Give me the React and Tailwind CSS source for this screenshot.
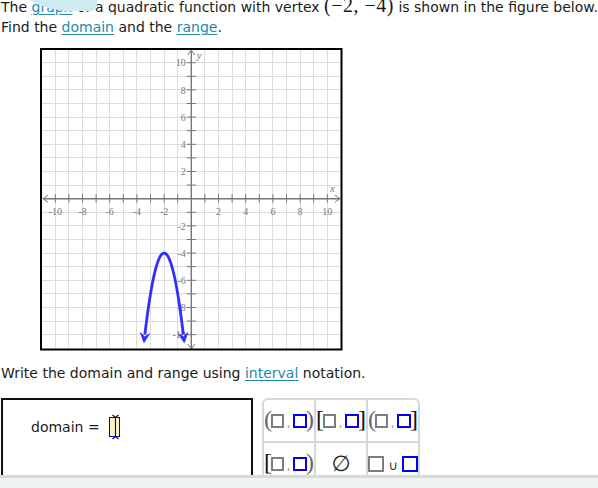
import React from "react";

// plot geometry (svg-local pixels)
const U = 13.6;
const OX = 151.3;
const OY = 150.7;
const X = (v) => OX + U * v;
const Y = (v) => OY - U * v;
const crisp = (p) => Math.round(p - 0.5) + 0.5;

const BLUE = "#2f2fff";
const AXIS = "#777";

function ArrowHead({ x, dir }) {
  const slope = -6 * (x + 2);
  const dxp = dir * U;
  const dyp = -(slope * dir) * U;
  const len = Math.hypot(dxp, dyp);
  const ux = dxp / len;
  const uy = dyp / len;
  const ang = (Math.atan2(uy, ux) * 180) / Math.PI;
  const tx = X(x) + ux * 8;
  const ty = Y(-10) + uy * 8;
  return (
    <path
      transform={`translate(${tx.toFixed(2)} ${ty.toFixed(2)}) rotate(${ang.toFixed(2)})`}
      d="M0,0 L-9.5,-4.6 L-6,0 L-9.5,4.6 Z"
      fill={BLUE}
      stroke={BLUE}
      strokeWidth="0.8"
      strokeLinejoin="round"
    />
  );
}

function Graph() {
  const grid = [];
  for (let i = -10; i <= 10; i++) grid.push(i);
  const x0 = -2 - Math.sqrt(2);
  const x1 = -2 + Math.sqrt(2);
  const pts = [];
  for (let k = 0; k <= 80; k++) {
    const x = x0 + ((x1 - x0) * k) / 80;
    const y = -3 * (x + 2) ** 2 - 4;
    pts.push(`${X(x).toFixed(2)},${Y(y).toFixed(2)}`);
  }
  const evens = [-10, -8, -6, -4, -2, 2, 4, 6, 8, 10];
  return (
    <svg width="303" height="303" viewBox="0 0 303 303" className="block">
      <rect x="0" y="0" width="303" height="303" fill="#fff" />
      {grid.map((i) => (
        <g key={`g${i}`}>
          <line x1={crisp(X(i))} y1="2" x2={crisp(X(i))} y2="301" stroke="#dcdcdc" strokeWidth="1" />
          <line x1="2" y1={crisp(Y(i))} x2="301" y2={crisp(Y(i))} stroke="#dcdcdc" strokeWidth="1" />
        </g>
      ))}

      {/* axes */}
      <line x1="3" y1={OY} x2="300" y2={OY} stroke={AXIS} strokeWidth="1.4" />
      <line x1={OX} y1="3" x2={OX} y2="300" stroke={AXIS} strokeWidth="1.4" />
      <polyline points={`8,${OY - 3.5} 3,${OY} 8,${OY + 3.5}`} fill="none" stroke={AXIS} strokeWidth="1" />
      <polyline points={`295,${OY - 3.5} 300,${OY} 295,${OY + 3.5}`} fill="none" stroke={AXIS} strokeWidth="1" />
      <polyline points={`${OX - 3.5},7 ${OX},2 ${OX + 3.5},7`} fill="none" stroke={AXIS} strokeWidth="1" />
      <polyline points={`${OX - 3.5},296 ${OX},301 ${OX + 3.5},296`} fill="none" stroke={AXIS} strokeWidth="1" />

      {/* ticks */}
      {grid
        .filter((i) => i !== 0)
        .map((i) => (
          <g key={`t${i}`}>
            <line x1={X(i)} y1={OY - 4.5} x2={X(i)} y2={OY + 4} stroke={AXIS} strokeWidth="1" />
            <line x1={OX - 4.5} y1={Y(i)} x2={OX + 4.5} y2={Y(i)} stroke={AXIS} strokeWidth="1" />
          </g>
        ))}

      {/* labels */}
      <g fontFamily="'Liberation Serif', serif" fontSize="10" fill="#777">
        {evens.map((i) => (
          <text key={`lx${i}`} x={X(i)} y={OY + 16} textAnchor="middle">
            {i < 0 ? `-${-i}` : `${i}`}
          </text>
        ))}
        {evens.map((i) => (
          <text key={`ly${i}`} x={OX - 5.5} y={Y(i) + 3.6} textAnchor="end">
            {i < 0 ? `-${-i}` : `${i}`}
          </text>
        ))}
        <text x={OX + 5.5} y="11" fontStyle="italic" fontSize="11">y</text>
        <text x="290" y={OY - 7} fontStyle="italic" fontSize="11">x</text>
      </g>

      {/* parabola */}
      <polyline points={pts.join(" ")} fill="none" stroke={BLUE} strokeWidth="2.8" strokeLinejoin="round" />
      <ArrowHead x={x0} dir={-1} />
      <ArrowHead x={x1} dir={1} />

      <rect x="1" y="1" width="300.5" height="300.5" fill="none" stroke="#000" strokeWidth="2" />
    </svg>
  );
}

function GrayBox({ big }) {
  return (
    <span
      className={
        big
          ? "inline-block shrink-0 w-[16px] h-[16px] border-2 border-[#7d7d7d] bg-white"
          : "inline-block shrink-0 w-[13px] h-[14px] border-2 border-[#7d7d7d] bg-white"
      }
    />
  );
}

function BlueBox({ big }) {
  return (
    <span
      className={
        big
          ? "inline-block shrink-0 w-[16px] h-[16px] border-2 border-[#0000ff] bg-white"
          : "inline-block shrink-0 w-[14px] h-[14px] border-2 border-[#0000ff] bg-white"
      }
    />
  );
}

function Delim({ ch, dark }) {
  return (
    <span
      className={
        dark
          ? "w-[6px] shrink-0 flex justify-center font-['Liberation_Serif',serif] text-[24px] leading-none text-[#111] -mt-[3px]"
          : "w-[6px] shrink-0 flex justify-center font-['Liberation_Serif',serif] text-[24px] leading-none text-[#666] -mt-[3px]"
      }
    >
      {ch}
    </span>
  );
}

function Interval({ l, r, ld, rd }) {
  return (
    <div className="flex items-center justify-center">
      <Delim ch={l} dark={ld} />
      <GrayBox />
      <span className="w-[9px] shrink-0 flex justify-center text-[11px] leading-none text-[#9a7a5a] mt-[6px]">,</span>
      <BlueBox />
      <Delim ch={r} dark={rd} />
    </div>
  );
}

function Cursor() {
  return (
    <svg width="9" height="26" viewBox="0 0 9 26" className="absolute left-[1px] -top-[4px]">
      <path d="M1.5,1 L4.5,3.5 L7.5,1 M4.5,3.5 L4.5,22.5 M1.5,25 L4.5,22.5 L7.5,25" fill="none" stroke="#111" strokeWidth="1.1" />
    </svg>
  );
}

export default function App() {
  return (
    <div className="relative w-[598px] h-[488px] overflow-hidden bg-white text-[#1b1b1b] font-['DejaVu_Sans',sans-serif] text-[14px] leading-[20px]">
      <div className="-mt-[5px] pl-[1px]">
        <p className="whitespace-nowrap">
          The <span className="text-[#1e8aab] underline underline-offset-2">graph</span> of a quadratic function with vertex{" "}
          <span className="font-['Liberation_Serif',serif] text-[20px] tracking-[0.5px]">(−2, −4)</span> is shown in the figure below.
        </p>
        <p>
          Find the <span className="text-[#1e8aab] underline underline-offset-2">domain</span> and the{" "}
          <span className="text-[#1e8aab] underline underline-offset-2">range</span>.
        </p>
      </div>

      {/* hint bubble over the first line */}
      <svg width="100" height="14" viewBox="0 0 100 14" className="absolute left-0 top-0">
        <path d="M31,0 H97 V5 Q97,11 90,11 H66 Q50,9 40,5 Q33,3 31,0 Z" fill="#cfeaf1" />
      </svg>

      <div className="ml-[40px] mt-[11px]">
        <Graph />
      </div>

      <p className="mt-[12px] pl-[1px]">
        Write the domain and range using{" "}
        <span className="text-[#1e8aab] underline underline-offset-2">interval</span> notation.
      </p>

      <div className="mt-[15px] flex items-start">
        <div className="ml-[1px] w-[252px] h-[120px] border-2 border-[#111] pl-[28px] pt-[17px] flex flex-col gap-[38px]">
          <div className="flex items-center h-[20px]">
            <span>domain =</span>
            <span className="relative ml-[9px] inline-block w-[11px] h-[20px] border border-[#0000ff] bg-[#fdf2c6]">
              <Cursor />
            </span>
          </div>
          <div className="flex items-center h-[20px]">
            <span className="ml-[10px]">range =</span>
            <span className="ml-[9px] inline-block w-[11px] h-[20px] border border-[#0000ff] bg-white" />
          </div>
        </div>

        <div className="ml-[9px] w-[158px] border-2 border-[#d3dadf] rounded-t-[6px] bg-[#d3dadf] grid grid-cols-3 gap-[2px] overflow-hidden">
          <div className="bg-white h-[41px] flex items-center justify-center">
            <Interval l="(" r=")" />
          </div>
          <div className="bg-white h-[41px] flex items-center justify-center">
            <Interval l="[" r="]" ld rd />
          </div>
          <div className="bg-white h-[41px] flex items-center justify-center">
            <Interval l="(" r="]" rd />
          </div>
          <div className="bg-white h-[41px] flex items-center justify-center">
            <Interval l="[" r=")" ld />
          </div>
          <div className="bg-white h-[41px] flex items-center justify-center">
            <span className="text-[22px] leading-none text-[#222]">∅</span>
          </div>
          <div className="bg-white h-[41px] flex items-center justify-center gap-[4px]">
            <GrayBox big />
            <span className="text-[13px] leading-none text-[#333] mt-[3px]">∪</span>
            <BlueBox big />
          </div>
        </div>
      </div>

      <div className="absolute left-0 bottom-0 w-full h-[13px] border-t-[3px] border-[#d4dbde] bg-[#eef2f3]" />
    </div>
  );
}
